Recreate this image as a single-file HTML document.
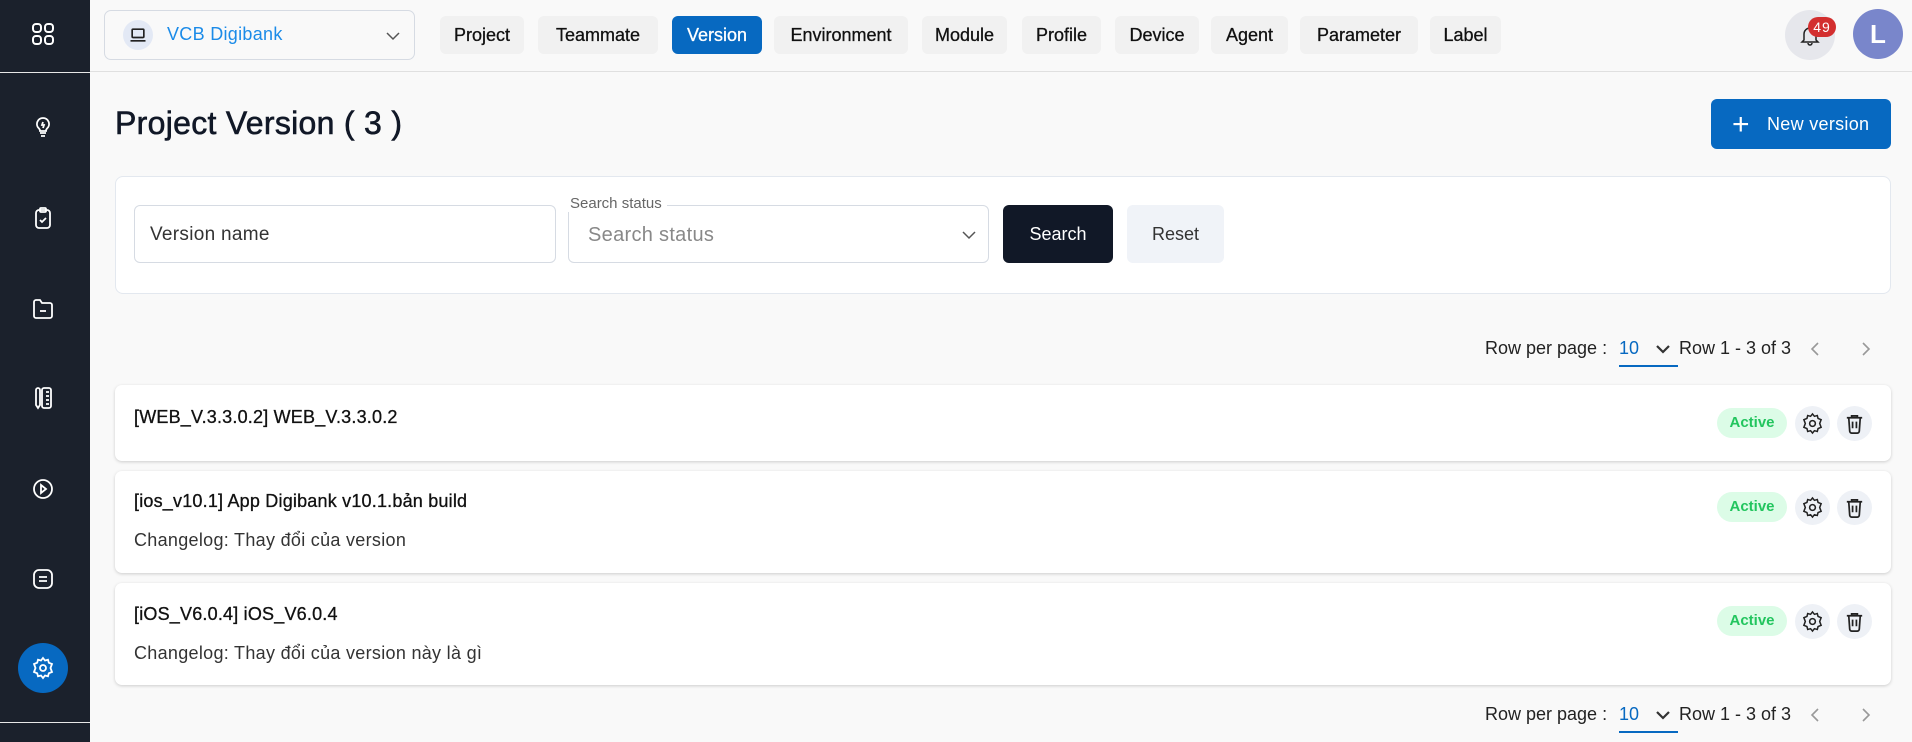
<!DOCTYPE html>
<html><head><meta charset="utf-8"><style>
*{box-sizing:border-box;margin:0;padding:0}
body{width:1912px;height:742px;overflow:hidden;background:#f9f9f9;font-family:"Liberation Sans","Noto Sans CJK SC",sans-serif;color:#111827;position:relative}
.abs{position:absolute}
.side{left:0;top:0;width:90px;height:742px;background:#1b212c}
.ic{position:absolute;left:31px;width:24px;height:24px}
.hdr{left:90px;top:0;width:1822px;height:72px;border-bottom:1.5px solid #e0e0e0}
.tab{position:absolute;top:16px;height:38px;background:#f1f1f1;border-radius:6px;font-size:18px;font-weight:500;line-height:38px;text-align:center;color:#111;-webkit-text-stroke:0.3px #111}
.tab.on{background:#0769c1;color:#fff;-webkit-text-stroke:0.3px #fff}
.card{position:absolute;left:115px;width:1776px;background:#fff;border-radius:7px;box-shadow:0 1px 3px rgba(0,0,0,.18)}
.t{position:absolute;left:19px;font-size:18px;font-weight:500;color:#111;letter-spacing:0.2px;-webkit-text-stroke:0.3px #111}
.c{position:absolute;left:19px;font-size:18px;color:#333;letter-spacing:0.3px}
.act{position:absolute;left:1602px;width:70px;height:30px;border-radius:15px;background:#dcfce7;color:#22c55e;font-weight:bold;font-size:15px;line-height:30px;text-align:center}
.cb{position:absolute;width:35px;height:35px;border-radius:50%;background:#eef1f6}
.cb svg{position:absolute;left:6px;top:6px}
.pg{position:absolute;font-size:18px;color:#222;white-space:nowrap}
</style></head><body>
<div class="abs side">
 <svg class="ic" style="top:22px" viewBox="0 0 24 24" fill="none" stroke="#fff" stroke-width="2"><rect x="2" y="2" width="8" height="8" rx="3"/><rect x="14" y="2" width="8" height="8" rx="3"/><rect x="2" y="14" width="8" height="8" rx="3"/><rect x="14" y="14" width="8" height="8" rx="3"/></svg>
 <div class="abs" style="left:0;top:72px;width:90px;border-top:1.5px solid #e8e8e8"></div>
 <svg class="ic" style="top:115px" viewBox="0 0 24 24" fill="none" stroke="#fff" stroke-width="1.8"><path d="M9 18h6M10 21h4M12 3a6 6 0 0 0-4 10.5c.8.8 1 1.5 1 2.5h6c0-1 .2-1.7 1-2.5A6 6 0 0 0 12 3z"/><path d="M12 7l-1 3h2l-1 3"/></svg>
 <svg class="ic" style="top:206px" viewBox="0 0 24 24" fill="none" stroke="#fff" stroke-width="1.8"><rect x="5" y="4" width="14" height="18" rx="3"/><rect x="9" y="2" width="6" height="4" rx="1"/><path d="M9 14l2 2 4-4"/></svg>
 <svg class="ic" style="top:297px" viewBox="0 0 24 24" fill="none" stroke="#fff" stroke-width="1.8"><path d="M3 7V5a2 2 0 0 1 2-2h4l2 3h8a2 2 0 0 1 2 2v11a2 2 0 0 1-2 2H5a2 2 0 0 1-2-2z"/><path d="M9 14h6"/></svg>
 <svg class="ic" style="top:386px" viewBox="0 0 24 24" fill="none" stroke="#fff" stroke-width="1.8"><path d="M5 4a2 2 0 0 1 4 0v15l-2 3-2-3z"/><rect x="11" y="2" width="9" height="20" rx="2"/><path d="M15 6h3M15 10h3M15 14h3M15 18h3"/></svg>
 <svg class="ic" style="top:477px" viewBox="0 0 24 24" fill="none" stroke="#fff" stroke-width="1.8"><circle cx="12" cy="12" r="9"/><path d="M10 8l5 4-5 4z"/></svg>
 <svg class="ic" style="top:567px" viewBox="0 0 24 24" fill="none" stroke="#fff" stroke-width="1.8"><rect x="3" y="3" width="18" height="18" rx="5"/><path d="M8 10h8M8 14h8"/></svg>
 <div class="abs" style="left:18px;top:643px;width:50px;height:50px;border-radius:50%;background:#0769c1"></div>
 <svg class="ic" style="top:656px" viewBox="0 0 24 24" fill="none" stroke="#fff" stroke-width="1.8"><circle cx="12" cy="12" r="3"/><path d="M12 2l2 2.5 3-.8.8 3L21 8l-1.5 4L21 16l-3.2 1.3-.8 3-3-.8L12 22l-2-2.5-3 .8-.8-3L3 16l1.5-4L3 8l3.2-1.3.8-3 3 .8z"/></svg>
 <div class="abs" style="left:0;top:722px;width:90px;border-top:1.5px solid #e8e8e8"></div>
</div>
<div class="abs hdr"></div>
<div class="abs" style="left:104px;top:10px;width:311px;height:50px;border:1.5px solid #d6dbe3;border-radius:7px;background:#f9f9f9">
 <div class="abs" style="left:18px;top:9px;width:30px;height:30px;border-radius:50%;background:#e3e9f5"></div>
 <svg class="abs" style="left:23px;top:14px" width="20" height="20" viewBox="0 0 24 24" fill="none" stroke="#222" stroke-width="2"><rect x="5" y="5" width="14" height="10" rx="1"/><path d="M3 19h18"/></svg>
 <div class="abs" style="left:62px;top:13px;font-size:18px;color:#1b8be8;letter-spacing:0.3px">VCB Digibank</div>
 <svg class="abs" style="left:280px;top:18px" width="16" height="14" viewBox="0 0 16 14" fill="none" stroke="#555" stroke-width="1.5"><path d="M2 4l6 6 6-6"/></svg>
</div>
<div class="tab" style="left:440px;width:84px">Project</div>
<div class="tab" style="left:538px;width:120px">Teammate</div>
<div class="tab on" style="left:672px;width:90px">Version</div>
<div class="tab" style="left:774px;width:134px">Environment</div>
<div class="tab" style="left:922px;width:85px">Module</div>
<div class="tab" style="left:1022px;width:79px">Profile</div>
<div class="tab" style="left:1115px;width:84px">Device</div>
<div class="tab" style="left:1211px;width:77px">Agent</div>
<div class="tab" style="left:1300px;width:118px">Parameter</div>
<div class="tab" style="left:1430px;width:71px">Label</div>
<div class="abs" style="left:1785px;top:10px;width:50px;height:50px;border-radius:50%;background:#e6e7ec"></div>
<svg class="abs" style="left:1798px;top:23px" width="24" height="24" viewBox="0 0 24 24" fill="none" stroke="#222" stroke-width="1.5"><path d="M6 17V11a6 6 0 0 1 12 0v6l2 2H4z"/><path d="M10 20a2 2 0 0 0 4 0"/></svg>
<div class="abs" style="left:1808px;top:17px;width:28px;height:20px;border-radius:10px;background:#d32f2f;color:#fff;font-size:14px;line-height:20px;text-align:center;letter-spacing:1px">49</div>
<div class="abs" style="left:1853px;top:9px;width:50px;height:50px;border-radius:50%;background:#7986cb;color:#fff;font-size:26px;font-weight:bold;line-height:50px;text-align:center">L</div>

<div class="abs" style="left:115px;top:105px;font-size:32px;font-weight:500;color:#111827;letter-spacing:0.3px;-webkit-text-stroke:0.6px #111827">Project Version ( 3 )</div>
<div class="abs" style="left:1711px;top:99px;width:180px;height:50px;border-radius:6px;background:#0769c1;color:#fff;font-size:18px;font-weight:500;line-height:50px"><span style="position:absolute;left:21px;top:1px;font-size:30px;font-weight:300">+</span><span style="position:absolute;left:56px;letter-spacing:0.3px">New version</span></div>

<div class="abs" style="left:115px;top:176px;width:1776px;height:118px;background:#fff;border:1.5px solid #e3e8ef;border-radius:8px"></div>
<div class="abs" style="left:134px;top:205px;width:422px;height:58px;border:1.5px solid #d6dbe3;border-radius:6px;background:#fff"><div class="abs" style="left:15px;top:18px;font-size:19px;color:#333;letter-spacing:0.3px">Version name</div></div>
<div class="abs" style="left:568px;top:205px;width:421px;height:58px;border:1.5px solid #d6dbe3;border-radius:6px;background:#fff"><div class="abs" style="left:19px;top:18px;font-size:20px;color:#888;letter-spacing:0.3px">Search status</div>
<svg class="abs" style="left:392px;top:22px" width="16" height="14" viewBox="0 0 16 14" fill="none" stroke="#555" stroke-width="1.5"><path d="M2 4l6 6 6-6"/></svg></div>
<div class="abs" style="left:565px;top:195px;padding:0 5px;background:#fff;font-size:15px;color:#666">Search status</div>
<div class="abs" style="left:1003px;top:205px;width:110px;height:58px;border-radius:6px;background:#111827;color:#fff;font-size:18px;font-weight:500;line-height:58px;text-align:center">Search</div>
<div class="abs" style="left:1127px;top:205px;width:97px;height:58px;border-radius:6px;background:#f0f3f8;color:#333;font-size:18px;line-height:58px;text-align:center">Reset</div>

<div class="pg" style="left:1485px;top:338px">Row per page : <span style="position:absolute;left:134px;color:#0769c1">10</span></div>
<svg class="abs" style="left:1655px;top:342px" width="16" height="14" viewBox="0 0 16 14" fill="none" stroke="#333" stroke-width="2.2"><path d="M2 4l6 6 6-6"/></svg>
<div class="abs" style="left:1619px;top:365px;width:59px;height:2px;background:#0769c1"></div>
<div class="pg" style="left:1679px;top:338px">Row 1 - 3 of 3</div>
<svg class="abs" style="left:1808px;top:340px" width="14" height="18" viewBox="0 0 14 18" fill="none" stroke="#999" stroke-width="1.6"><path d="M10 3L4 9l6 6"/></svg>
<svg class="abs" style="left:1859px;top:340px" width="14" height="18" viewBox="0 0 14 18" fill="none" stroke="#999" stroke-width="1.6"><path d="M4 3l6 6-6 6"/></svg>

<div class="card" style="top:385px;height:76px"><div class="t" style="top:22px">[WEB_V.3.3.0.2] WEB_V.3.3.0.2</div>
 <div class="act" style="top:23px">Active</div>
 <div class="cb" style="left:1680px;top:21px"><svg width="23" height="23" viewBox="0 0 24 24" fill="none" stroke="#222" stroke-width="1.6"><circle cx="12" cy="12" r="3"/><path d="M12 2l2 2.5 3-.8.8 3L21 8l-1.5 4L21 16l-3.2 1.3-.8 3-3-.8L12 22l-2-2.5-3 .8-.8-3L3 16l1.5-4L3 8l3.2-1.3.8-3 3 .8z"/></svg></div>
 <div class="cb" style="left:1722px;top:21px"><svg width="23" height="23" viewBox="0 0 24 24" fill="none" stroke="#222" stroke-width="1.8"><path d="M4 6h16M9 6V4h6v2M6 6l1 14a2 2 0 0 0 2 2h6a2 2 0 0 0 2-2l1-14M10 10v7M14 10v7"/></svg></div>
</div>
<div class="card" style="top:471px;height:102px"><div class="t" style="top:20px">[ios_v10.1] App Digibank v10.1.bản build</div><div class="c" style="top:59px">Changelog: Thay đổi của version</div>
 <div class="act" style="top:21px">Active</div>
 <div class="cb" style="left:1680px;top:19px"><svg width="23" height="23" viewBox="0 0 24 24" fill="none" stroke="#222" stroke-width="1.6"><circle cx="12" cy="12" r="3"/><path d="M12 2l2 2.5 3-.8.8 3L21 8l-1.5 4L21 16l-3.2 1.3-.8 3-3-.8L12 22l-2-2.5-3 .8-.8-3L3 16l1.5-4L3 8l3.2-1.3.8-3 3 .8z"/></svg></div>
 <div class="cb" style="left:1722px;top:19px"><svg width="23" height="23" viewBox="0 0 24 24" fill="none" stroke="#222" stroke-width="1.8"><path d="M4 6h16M9 6V4h6v2M6 6l1 14a2 2 0 0 0 2 2h6a2 2 0 0 0 2-2l1-14M10 10v7M14 10v7"/></svg></div>
</div>
<div class="card" style="top:583px;height:102px"><div class="t" style="top:21px">[iOS_V6.0.4] iOS_V6.0.4</div><div class="c" style="top:60px">Changelog: Thay đổi của version này là gì</div>
 <div class="act" style="top:23px">Active</div>
 <div class="cb" style="left:1680px;top:21px"><svg width="23" height="23" viewBox="0 0 24 24" fill="none" stroke="#222" stroke-width="1.6"><circle cx="12" cy="12" r="3"/><path d="M12 2l2 2.5 3-.8.8 3L21 8l-1.5 4L21 16l-3.2 1.3-.8 3-3-.8L12 22l-2-2.5-3 .8-.8-3L3 16l1.5-4L3 8l3.2-1.3.8-3 3 .8z"/></svg></div>
 <div class="cb" style="left:1722px;top:21px"><svg width="23" height="23" viewBox="0 0 24 24" fill="none" stroke="#222" stroke-width="1.8"><path d="M4 6h16M9 6V4h6v2M6 6l1 14a2 2 0 0 0 2 2h6a2 2 0 0 0 2-2l1-14M10 10v7M14 10v7"/></svg></div>
</div>

<div class="pg" style="left:1485px;top:704px">Row per page : <span style="position:absolute;left:134px;color:#0769c1">10</span></div>
<svg class="abs" style="left:1655px;top:708px" width="16" height="14" viewBox="0 0 16 14" fill="none" stroke="#333" stroke-width="2.2"><path d="M2 4l6 6 6-6"/></svg>
<div class="abs" style="left:1619px;top:731px;width:59px;height:2px;background:#0769c1"></div>
<div class="pg" style="left:1679px;top:704px">Row 1 - 3 of 3</div>
<svg class="abs" style="left:1808px;top:706px" width="14" height="18" viewBox="0 0 14 18" fill="none" stroke="#999" stroke-width="1.6"><path d="M10 3L4 9l6 6"/></svg>
<svg class="abs" style="left:1859px;top:706px" width="14" height="18" viewBox="0 0 14 18" fill="none" stroke="#999" stroke-width="1.6"><path d="M4 3l6 6-6 6"/></svg>
</body></html>
